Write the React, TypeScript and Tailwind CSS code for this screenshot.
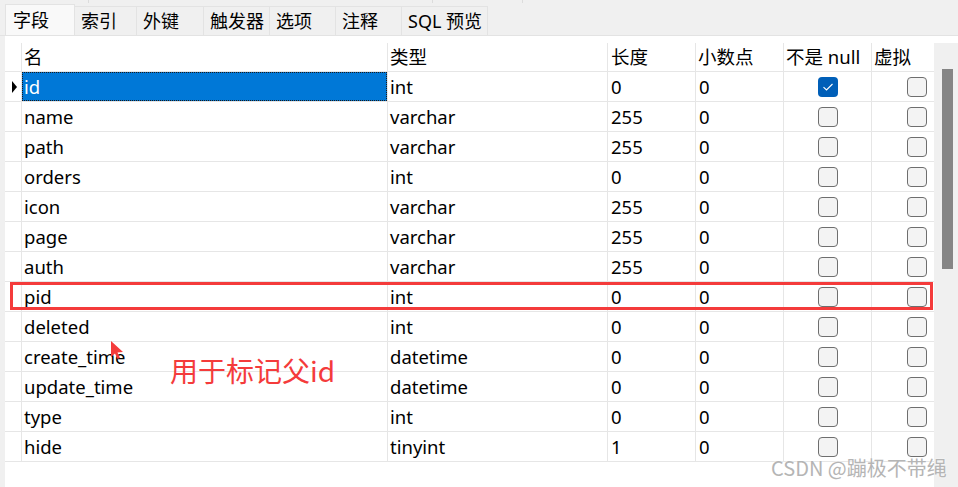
import React from "react";

type Row = { name: string; type: string; len: string; dec: string; notNull?: boolean };

const rows: Row[] = [
  { name: "id", type: "int", len: "0", dec: "0", notNull: true },
  { name: "name", type: "varchar", len: "255", dec: "0" },
  { name: "path", type: "varchar", len: "255", dec: "0" },
  { name: "orders", type: "int", len: "0", dec: "0" },
  { name: "icon", type: "varchar", len: "255", dec: "0" },
  { name: "page", type: "varchar", len: "255", dec: "0" },
  { name: "auth", type: "varchar", len: "255", dec: "0" },
  { name: "pid", type: "int", len: "0", dec: "0" },
  { name: "deleted", type: "int", len: "0", dec: "0" },
  { name: "create_time", type: "datetime", len: "0", dec: "0" },
  { name: "update_time", type: "datetime", len: "0", dec: "0" },
  { name: "type", type: "int", len: "0", dec: "0" },
  { name: "hide", type: "tinyint", len: "1", dec: "0" },
];

const tabs = [
  { label: "字段", w: "w-[70px]" },
  { label: "索引", w: "w-[62px]" },
  { label: "外键", w: "w-[67px]" },
  { label: "触发器", w: "w-[66px]" },
  { label: "选项", w: "w-[66px]" },
  { label: "注释", w: "w-[66px]" },
  { label: "SQL 预览", w: "w-[86px]" },
];

function Check({ on }: { on?: boolean }) {
  if (on) {
    return (
      <div className="w-[20px] h-[20px] rounded-[4px] bg-[#005fb8] flex items-center justify-center">
        <svg width="12" height="10" viewBox="0 0 12 10">
          <path d="M1.5 5.2 L4.5 8 L10.5 2" fill="none" stroke="#fff" strokeWidth="1.1" />
        </svg>
      </div>
    );
  }
  return <div className="w-[20px] h-[20px] rounded-[4px] bg-[#f3f3f3] border border-[#6e6e6e]" />;
}

const cell = "border-r border-b border-[#e6e6e6] flex items-center";

export default function App() {
  return (
    <div className="relative w-[958px] h-[487px] overflow-hidden bg-[#f0f0f0] text-black text-[18.5px] font-['Noto_Sans','Noto_Sans_CJK_SC',sans-serif]">
      {/* top strip ticks */}
      <div className="h-[4px] flex">
        <div className="w-[88px]" />
        <div className="w-px h-[3px] bg-[#dcdcdc]" />
        <div className="w-[343px]" />
        <div className="w-px h-[3px] bg-[#dcdcdc]" />
        <div className="w-[89px]" />
        <div className="w-px h-[3px] bg-[#dcdcdc]" />
      </div>

      {/* tabs */}
      <div className="flex items-end h-[32px] pl-[5px] border-b border-[#e3e3e3] text-[18px]">
        {tabs.map((t, i) => (
          <div
            key={t.label}
            className={
              i === 0
                ? `${t.w} h-[31px] bg-[#f9f9f9] border border-b-0 border-[#e3e3e3] pl-[7px] flex items-center leading-none`
                : `${t.w} h-[29px] bg-[#f0f0f0] border-r border-t border-[#e3e3e3] pl-[6px] flex items-center leading-none`
            }
          >
            {t.label}
          </div>
        ))}
      </div>

      {/* body */}
      <div className="flex h-[451px]">
        <div className="w-[5px]" />
        <div className="flex-1 bg-white pt-[7px] flex">
          <div className="w-[929px]">
            <div className="grid grid-cols-[17px_366px_220px_88px_88px_88px_62px]">
              {/* header */}
              <div className={`${cell} h-[29px]`} />
              <div className={`${cell} h-[29px] pl-[2px]`}>名</div>
              <div className={`${cell} h-[29px] pl-[2px]`}>类型</div>
              <div className={`${cell} h-[29px] pl-[3px]`}>长度</div>
              <div className={`${cell} h-[29px] pl-[2px]`}>小数点</div>
              <div className={`${cell} h-[29px] pl-[2px]`}>不是 null</div>
              <div className="border-b border-[#e6e6e6] h-[29px] pl-[2px] flex items-center">虚拟</div>

              {rows.map((r, i) => (
                <React.Fragment key={r.name}>
                  <div className={`${cell} h-[30px] pl-[7px]`}>
                    {i === 0 && (
                      <svg width="6" height="12" viewBox="0 0 6 12">
                        <path d="M0 0 L5 6 L0 12 Z" fill="#000" />
                      </svg>
                    )}
                  </div>
                  <div className={`${cell} h-[30px]`}>
                    {i === 0 ? (
                      <div className="w-full h-full bg-[#0078d7] text-white pl-[2px] flex items-center outline outline-1 outline-dotted outline-[#1b1b1b] outline-offset-[-1px]">
                        {r.name}
                      </div>
                    ) : (
                      <span className="pl-[2px]">{r.name}</span>
                    )}
                  </div>
                  <div className={`${cell} h-[30px] pl-[2px]`}>{r.type}</div>
                  <div className={`${cell} h-[30px] pl-[3px]`}>{r.len}</div>
                  <div className={`${cell} h-[30px] pl-[3px]`}>{r.dec}</div>
                  <div className={`${cell} h-[30px] justify-center`}>
                    <Check on={r.notNull} />
                  </div>
                  <div className="border-b border-[#e6e6e6] h-[30px] flex items-center justify-end pr-[7px]">
                    <Check />
                  </div>
                </React.Fragment>
              ))}
            </div>
          </div>
          {/* scrollbar */}
          <div className="flex-1 bg-[#f0f0f0] pt-[26px] pl-[8px]">
            <div className="w-[11px] h-[200px] bg-[#858585]" />
          </div>
        </div>
      </div>

      {/* annotation: red highlight box */}
      <div className="absolute left-[10px] top-[282px] w-[923px] h-[28px] border-[3px] border-[#f43b3b]" />

      {/* red cursor arrow */}
      <svg className="absolute left-[109px] top-[340px]" width="16" height="20" viewBox="0 0 16 20">
        <path d="M2 1 L14 12 L8.5 12.5 L11 18 L8.5 19 L6 13.5 L2 17 Z" fill="#f43b3b" />
      </svg>

      {/* annotation text */}
      <div className="absolute left-[170px] top-[356px] text-[28px] leading-none text-[#f43b3b] font-['Noto_Sans_CJK_SC',sans-serif]">
        用于标记父id
      </div>

      {/* watermark */}
      <div className="absolute left-[771px] top-[458px] text-[20px] leading-none text-[#b5b5b5] font-['Noto_Sans_CJK_SC',sans-serif] [text-shadow:0_0_2px_#ffffff]">
        CSDN @蹦极不带绳
      </div>
    </div>
  );
}
